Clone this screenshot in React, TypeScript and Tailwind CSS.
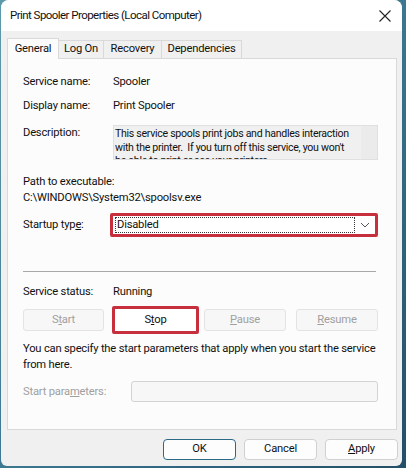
import React from 'react';

function Label({ children, muted }: { children: React.ReactNode; muted?: boolean }) {
  return <div className={`w-[90px] shrink-0 ${muted ? 'text-[#a0a0a0]' : ''}`}>{children}</div>;
}

function SvcButton({ label, enabled }: { label: React.ReactNode; enabled?: boolean }) {
  return (
    <div
      className={`h-[22px] w-[82px] flex items-center justify-center rounded-[3px] border ${
        enabled ? 'bg-white border-[#cfcfcf] text-black' : 'bg-[#f7f7f7] border-[#e3e3e3] text-[#a0a0a0]'
      }`}
    >
      {label}
    </div>
  );
}

function DialogButton({ children, primary }: { children: React.ReactNode; primary?: boolean }) {
  return (
    <div
      className={`h-[21px] w-[73px] flex items-center justify-center rounded-[4px] bg-[#fdfdfd] border ${
        primary ? 'border-[#2a6a84]' : 'border-[#d0d0d0]'
      }`}
    >
      {children}
    </div>
  );
}

export default function App() {
  return (
    <div
      className="w-[406px] h-[468px] pl-[1px] pr-[4px] pb-[2px] bg-gradient-to-br from-[#5c9aab] via-[#3c7890] to-[#234f68] text-[11.2px] tracking-[-0.2px] text-[#111]"
      style={{ fontFamily: 'Roboto, "Noto Sans", sans-serif' }}
    >
      <div className="h-full rounded-t-[8px] rounded-b-[6px] overflow-hidden bg-[#f0f0f0] flex flex-col">
        {/* title bar */}
        <div className="h-[31px] bg-white flex items-center justify-between pl-[9px] pr-[8px] shrink-0">
          <span className="text-[11.5px] tracking-[-0.55px]">Print Spooler Properties (Local Computer)</span>
          <svg width="14" height="14" viewBox="0 0 14 14" className="mr-[2px]">
            <path d="M1.5 1.5 L12.5 12.5 M12.5 1.5 L1.5 12.5" stroke="#222" strokeWidth="1.1" />
          </svg>
        </div>

        {/* tabs */}
        <div className="flex items-end h-[27px] pl-[6px] shrink-0">
          <div className="h-[21px] w-[52px] flex items-center justify-center bg-[#fcfcfc] border border-b-0 border-[#d9d9d9] relative z-10 -mb-[1px]">
            General
          </div>
          <div className="h-[18px] w-[45px] flex items-center justify-center border border-l-0 border-b-0 border-[#d9d9d9]">Log On</div>
          <div className="h-[18px] w-[58px] flex items-center justify-center border border-l-0 border-b-0 border-[#d9d9d9]">Recovery</div>
          <div className="h-[18px] w-[80px] flex items-center justify-center border border-l-0 border-b-0 border-[#d9d9d9]">Dependencies</div>
        </div>

        {/* panel */}
        <div className="ml-[6px] mr-[5px] h-[372px] shrink-0 bg-[#fcfcfc] border border-[#d9d9d9] pl-[15px] pr-[18px] leading-[16px] flex flex-col">
          <div className="flex mt-[15px]">
            <Label>Service name:</Label>
            <div>Spooler</div>
          </div>
          <div className="flex mt-[8px]">
            <Label>Display name:</Label>
            <div>Print Spooler</div>
          </div>
          <div className="flex mt-[11px]">
            <Label>Description:</Label>
            <div className="w-[266px] h-[35px] bg-[#f0f0f0] border border-[#e0e0e0] flex overflow-hidden">
              <div className="flex-1 pl-[1px] leading-[13.5px] pt-[1px] text-[10.6px] tracking-[-0.3px] whitespace-nowrap overflow-hidden">
                This service spools print jobs and handles interaction
                <br />
                with the printer.&nbsp; If you turn off this service, you won't
                <br />
                be able to print or see your printers.
              </div>
              <div className="w-[16px] bg-[#ebebeb] shrink-0" />
            </div>
          </div>
          <div className="mt-[14px]">Path to executable:</div>
          <div className="leading-[15px]">C:\WINDOWS\System32\spoolsv.exe</div>

          <div className="flex items-center mt-[8px]">
            <div className="w-[87px] shrink-0">
              Startup typ<span className="underline">e</span>:
            </div>
            <div className="w-[271px] h-[24px] border-[3px] border-[#c62f3b] rounded-[2px] bg-white flex items-center pl-[2px] pr-[4px]">
              <div className="flex-1 h-[16px] border border-dotted border-[#333] flex items-center leading-[14px] pl-[1px]">Disabled</div>
              <svg width="10" height="6" viewBox="0 0 10 6" className="ml-[5px] mr-[1px]">
                <path d="M1 1 L5 5 L9 1" fill="none" stroke="#555" strokeWidth="1" />
              </svg>
            </div>
          </div>

          <div className="mt-[34px] h-px bg-[#a8a8a8] w-[353px]" />

          <div className="flex mt-[12px]">
            <Label>Service status:</Label>
            <div>Running</div>
          </div>

          <div className="flex items-center mt-[6px] h-[28px]">
            <SvcButton label={<span>S<span className="underline">t</span>art</span>} />
            <div className="ml-[8px] w-[88px] h-[28px] border-[3px] border-[#c62f3b] rounded-[2px] bg-white flex items-center justify-center">
              S<span className="underline">t</span>op
            </div>
            <div className="ml-[5px]">
              <SvcButton label={<span><span className="underline">P</span>ause</span>} />
            </div>
            <div className="ml-[10px]">
              <SvcButton label={<span><span className="underline">R</span>esume</span>} />
            </div>
          </div>

          <div className="mt-[7px] w-[356px]">
            You can specify the start parameters that apply when you start the service from here.
          </div>

          <div className="flex items-center mt-[8px]">
            <div className="w-[108px] shrink-0 text-[#a0a0a0]">
              Start para<span className="underline">m</span>eters:
            </div>
            <div className="w-[249px] h-[21px] rounded-[3px] border border-[#d3d3d3] bg-[#f7f7f7]" />
          </div>
        </div>

        {/* bottom buttons */}
        <div className="flex justify-end gap-[8px] pr-[4px] mt-[9px]">
          <DialogButton primary>OK</DialogButton>
          <DialogButton>Cancel</DialogButton>
          <DialogButton>
            <span><span className="underline">A</span>pply</span>
          </DialogButton>
        </div>
      </div>
    </div>
  );
}
